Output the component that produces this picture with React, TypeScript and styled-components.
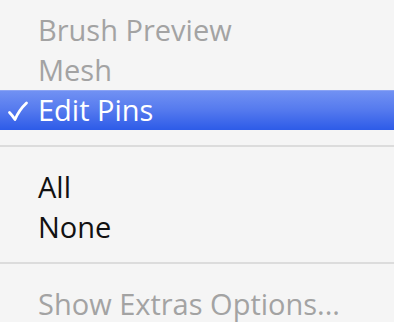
import * as React from 'react';
import styled, { createGlobalStyle } from 'styled-components';

const GlobalStyle = createGlobalStyle`
  html, body {
    margin: 0;
    padding: 0;
    background: #f5f5f5;
  }
  body {
    font-family: 'Open Sans', 'DejaVu Sans', sans-serif;
    -webkit-font-smoothing: antialiased;
  }
`;

const Menu = styled.div`
  width: 394px;
  height: 322px;
  overflow: hidden;
  padding-top: 10px;
  box-sizing: border-box;
  background: #f5f5f5;
`;

const Item = styled.div<{ $disabled?: boolean; $selected?: boolean }>`
  position: relative;
  height: 40px;
  display: flex;
  align-items: center;
  padding: 0 0 2px 38px;
  font-size: 29px;
  line-height: 38px;
  white-space: nowrap;
  color: ${(p) => (p.$disabled ? '#a3a3a3' : p.$selected ? '#ffffff' : '#111111')};
  background: ${(p) =>
    p.$selected ? 'linear-gradient(to bottom, #7191f3 0%, #5479ee 50%, #2d5be8 100%)' : 'transparent'};
  border-top: 1px solid ${(p) => (p.$selected ? '#8aa3f4' : 'transparent')};
  box-sizing: border-box;
`;

const Check = styled.svg`
  position: absolute;
  left: 7px;
  top: 9px;
  width: 22px;
  height: 22px;
`;

const Separator = styled.div`
  height: 37px;
  padding-top: 15px;
  box-sizing: border-box;

  &::after {
    content: '';
    display: block;
    width: 100%;
    height: 2px;
    background: #dcdcdc;
  }
`;

const App: React.FC = () => (
  <>
    <GlobalStyle />
    <Menu>
      <Item $disabled>Brush Preview</Item>
      <Item $disabled>Mesh</Item>
      <Item $selected>
        <Check viewBox="0 0 22 22">
          <path d="M2.5 12.5 Q5 15 8 19.5 Q12 10 19.5 3" fill="none" stroke="#ffffff" strokeWidth="2.8" strokeLinecap="round" strokeLinejoin="round" />
        </Check>
        Edit Pins
      </Item>
      <Separator />
      <Item>All</Item>
      <Item>None</Item>
      <Separator />
      <Item $disabled>Show Extras Options...</Item>
    </Menu>
  </>
);

export default App;
